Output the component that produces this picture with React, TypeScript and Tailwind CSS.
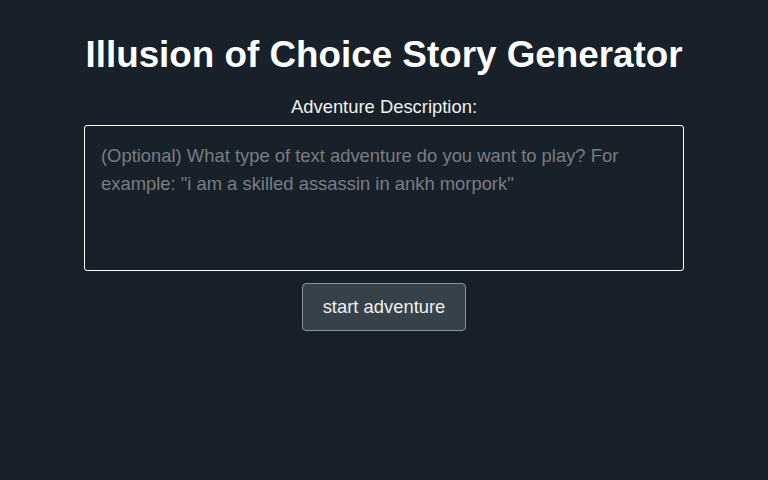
export default function App() {
  return (
    <div
      className="min-h-screen w-full bg-[#18202a] text-white flex flex-col items-center pt-[35px]"
      style={{ fontFamily: '"Liberation Sans", Arial, sans-serif' }}
    >
      <h1 className="text-[36.8px] leading-[40px] font-bold">Illusion of Choice Story Generator</h1>
      <label htmlFor="desc" className="mt-[20px] text-[18.4px] leading-[24px] text-[#f2f2f2]">
        Adventure Description:
      </label>
      <textarea
        id="desc"
        className="mt-[6px] w-[600px] h-[146px] resize-none bg-[#18202a] border border-white rounded-[3px] px-4 py-4 text-[18.4px] leading-[28px] text-white placeholder:text-[#7a7d82] outline-none"
        placeholder={'(Optional) What type of text adventure do you want to play? For example: "i am a skilled assassin in ankh morpork"'}
      />
      <button className="mt-[12px] w-[164px] h-[48px] bg-[#36414a] border border-[#8a939b] rounded-[4px] text-[18.4px] text-[#f0f0f0]">
        start adventure
      </button>
    </div>
  );
}
